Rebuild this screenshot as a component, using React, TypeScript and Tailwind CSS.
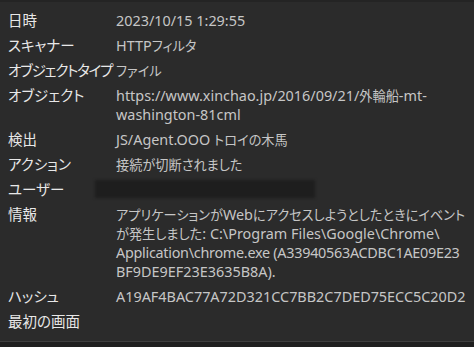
import React from "react";

const jp = { fontFamily: "'Noto Sans', 'Noto Sans CJK JP', sans-serif" };

function J({ children }: { children: React.ReactNode }) {
  return <span className="text-[13.2px] leading-[12px]">{children}</span>;
}

function Row({ label, children, tight }: { label: string; children?: React.ReactNode; tight?: boolean }) {
  return (
    <div className="flex py-[3px] leading-[19px]">
      <div
        className={
          "w-[108px] shrink-0 text-[#e8e8e8] text-[14.5px] [font-feature-settings:'palt'] whitespace-nowrap " +
          (tight ? "tracking-[-1.2px]" : "")
        }
      >
        {label}
      </div>
      <div className="flex-1 text-[#c6c6c6] text-[14.4px] [font-feature-settings:'palt'] whitespace-nowrap">
        {children}
      </div>
    </div>
  );
}

export default function App() {
  return (
    <div className="w-[474px] h-[347px] bg-[#2b2b2b] flex flex-col overflow-hidden" style={jp}>
      <div className="h-[2px] bg-[#242424]" />
      <div className="flex-1 pl-[8px] pt-[6px]">
        <Row label="日時">2023/10/15 1:29:55</Row>
        <Row label="スキャナー">
          HTTP<J>フィルタ</J>
        </Row>
        <Row label="オブジェクトタイプ" tight>
          <J>ファイル</J>
        </Row>
        <Row label="オブジェクト">
          https://www.xinchao.jp/2016/09/21/<J>外輪船</J>-mt-
          <br />
          washington-81cml
        </Row>
        <Row label="検出">
          JS/Agent.OOO <J>トロイの木馬</J>
        </Row>
        <Row label="アクション">
          <J>接続が切断されました</J>
        </Row>
        <Row label="ユーザー">
          <div className="h-[19px] relative">
            <div className="absolute left-[-21px] top-[0px] w-[220px] h-[18px] bg-[#1e1e1e] blur-[1.5px]" />
          </div>
        </Row>
        <Row label="情報">
          <J>アプリケーションが</J>Web<J>にアクセスしようとしたときにイベント</J>
          <br />
          <J>が発生しました</J>: C:\Program Files\Google\Chrome\
          <br />
          <span className="tracking-[-0.28px]">Application\chrome.exe (A33940563ACDBC1AE09E23</span>
          <br />
          BF9DE9EF23E3635B8A).
        </Row>
        <Row label="ハッシュ">A19AF4BAC77A72D321CC7BB2C7DED75ECC5C20D2</Row>
        <Row label="最初の画面" />
      </div>
      <div className="h-[1px] bg-[#3e3e3e]" />
      <div className="h-[5px] bg-[#1f1f1f]" />
    </div>
  );
}
